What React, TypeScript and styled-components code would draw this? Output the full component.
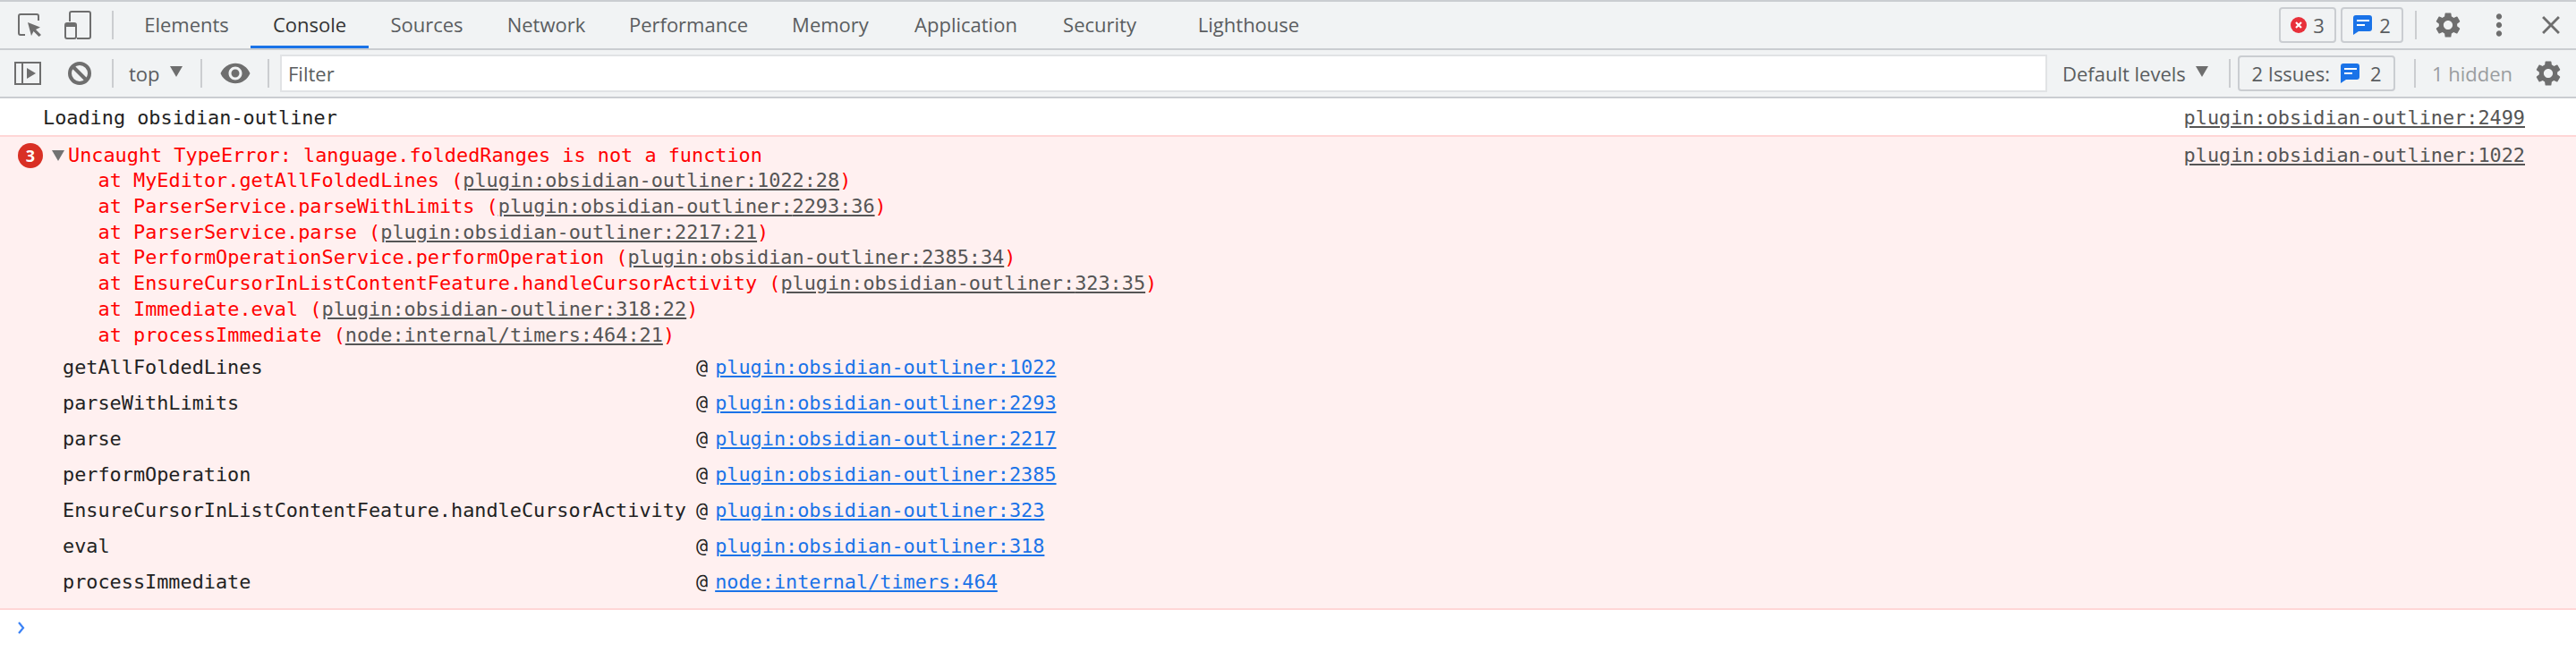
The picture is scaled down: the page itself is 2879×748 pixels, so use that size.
import React from 'react';
import styled, { createGlobalStyle } from 'styled-components';
import { MdClose, MdMoreVert, MdSettings, MdVisibility } from 'react-icons/md';

const GlobalStyle = createGlobalStyle`
  html, body {
    margin: 0;
    padding: 0;
    background: #fff;
  }
`;

const uiFont = `"Open Sans", "Noto Sans", sans-serif`;
const monoFont = `"DejaVu Sans Mono", "Liberation Mono", monospace`;

const Page = styled.div`
  width: 2879px;
  height: 748px;
  overflow: hidden;
  background: #fff;
  display: flex;
  flex-direction: column;
  border-top: 2px solid #cacdd1;
  box-sizing: border-box;
`;

const Bar = styled.div<{ $pr?: number }>`
  height: 54px;
  flex: none;
  box-sizing: border-box;
  display: flex;
  align-items: center;
  background: #f1f3f4;
  border-bottom: 2px solid #cacdd1;
  font-family: ${uiFont};
  font-size: 22px;
  color: #5a5d60;
  padding: 0 ${p => p.$pr ?? 0}px 0 7px;
`;

const IconSlot = styled.div<{ $w: number }>`
  width: ${p => p.$w}px;
  flex: none;
  display: flex;
  align-items: center;
  justify-content: center;
  color: #6e6e6e;
`;

const Divider = styled.div<{ $ml?: number; $mr?: number }>`
  width: 2px;
  height: 32px;
  flex: none;
  background: #cbcdd0;
  margin-left: ${p => p.$ml ?? 0}px;
  margin-right: ${p => p.$mr ?? 0}px;
`;

const Tab = styled.div<{ $w: number; $active?: boolean }>`
  width: ${p => p.$w}px;
  flex: none;
  height: 100%;
  box-sizing: border-box;
  display: flex;
  align-items: center;
  justify-content: center;
  color: ${p => (p.$active ? '#333' : '#5a5d60')};
  border-bottom: 3px solid ${p => (p.$active ? '#1a73e8' : 'transparent')};
`;

const Spacer = styled.div`
  flex: 1;
`;

const Counter = styled.div<{ $w: number; $gap: number }>`
  width: ${p => p.$w}px;
  height: 40px;
  flex: none;
  box-sizing: border-box;
  border: 2px solid #cacdd1;
  border-radius: 4px;
  display: flex;
  align-items: center;
  justify-content: center;
  gap: ${p => p.$gap}px;
  margin-right: 5px;
`;

const FilterBox = styled.div`
  flex: 1;
  height: 42px;
  box-sizing: border-box;
  background: #fff;
  border: 2px solid #e1e3e5;
  display: flex;
  align-items: center;
  padding-left: 7px;
  color: #5a5d60;
`;

const Caret = styled.span`
  width: 0;
  height: 0;
  border-left: 7.5px solid transparent;
  border-right: 7.5px solid transparent;
  border-top: 12px solid #6e6e6e;
  display: inline-block;
  margin-top: -4px;
`;

const Select = styled.div<{ $w: number }>`
  display: flex;
  align-items: center;
  gap: 11px;
  width: ${p => p.$w}px;
  padding-left: 17px;
  box-sizing: border-box;
  flex: none;
`;

const Hidden = styled.div`
  width: 126px;
  flex: none;
  box-sizing: border-box;
  padding-left: 18px;
  color: #9a9da0;
`;

const Log = styled.div`
  font-family: ${monoFont};
  font-size: 21.85px;
  color: #222;
`;

const InfoRow = styled.div`
  height: 41px;
  box-sizing: border-box;
  padding: 2px 57px 0 48px;
  display: flex;
  align-items: center;
  justify-content: space-between;
`;

const ErrorBlock = styled.div`
  height: 531px;
  box-sizing: border-box;
  background: #fff0f0;
  border-top: 2px solid #ffd6d6;
  border-bottom: 2px solid #ffd6d6;
  padding-top: 6px;
`;

const ErrorHead = styled.div`
  display: flex;
  align-items: center;
  height: 29px;
  padding-right: 57px;
  color: #f00;
`;

const ErrorCount = styled.div`
  width: 28px;
  height: 28px;
  margin-left: 20px;
  border-radius: 50%;
  background: #d93025;
  color: #fff;
  font-family: ${uiFont};
  font-weight: 700;
  font-size: 18px;
  display: flex;
  align-items: center;
  justify-content: center;
  flex: none;
`;

const Disclosure = styled.span`
  width: 0;
  height: 0;
  margin: 0 4px 0 10px;
  border-left: 7px solid transparent;
  border-right: 7px solid transparent;
  border-top: 12px solid #727272;
  flex: none;
`;

const Message = styled.div`
  flex: 1;
  white-space: pre;
`;

const Source = styled.span`
  color: #555;
  text-decoration: underline;
  white-space: pre;
`;

const StackList = styled.div`
  padding-left: 57px;
  color: #f00;
  white-space: pre;
  margin-bottom: 1px;
`;

const StackLine = styled.div`
  height: 28.8px;
  line-height: 28.8px;
`;

const Frames = styled.div`
  display: grid;
  grid-template-columns: 708px auto;
  grid-auto-rows: 40px;
  padding-left: 70px;
`;

const FrameName = styled.div`
  display: flex;
  align-items: center;
  white-space: pre;
`;

const FrameLink = styled.div`
  display: flex;
  align-items: center;
  white-space: pre;
`;

const At = styled.span`
  margin-right: 8px;
`;

const Link = styled.span`
  color: #1a73e8;
  text-decoration: underline;
`;

const Prompt = styled.div`
  height: 40px;
  padding-left: 19px;
  display: flex;
  align-items: center;
`;

const tabs = [
  { name: 'Elements', w: 143 },
  { name: 'Console', w: 132, active: true },
  { name: 'Sources', w: 130 },
  { name: 'Network', w: 137 },
  { name: 'Performance', w: 181 },
  { name: 'Memory', w: 136 },
  { name: 'Application', w: 167 },
  { name: 'Security', w: 132 },
  { name: 'Lighthouse', w: 201 },
];

const stack = [
  ['MyEditor.getAllFoldedLines', '1022:28'],
  ['ParserService.parseWithLimits', '2293:36'],
  ['ParserService.parse', '2217:21'],
  ['PerformOperationService.performOperation', '2385:34'],
  ['EnsureCursorInListContentFeature.handleCursorActivity', '323:35'],
  ['Immediate.eval', '318:22'],
];

const frames = [
  ['getAllFoldedLines', 'plugin:obsidian-outliner:1022'],
  ['parseWithLimits', 'plugin:obsidian-outliner:2293'],
  ['parse', 'plugin:obsidian-outliner:2217'],
  ['performOperation', 'plugin:obsidian-outliner:2385'],
  ['EnsureCursorInListContentFeature.handleCursorActivity', 'plugin:obsidian-outliner:323'],
  ['eval', 'plugin:obsidian-outliner:318'],
  ['processImmediate', 'node:internal/timers:464'],
];

const InspectIcon = () => (
  <svg width="26" height="26" viewBox="0 0 26 26" fill="none">
    <path d="M8 24H3a2 2 0 0 1-2-2V3a2 2 0 0 1 2-2h18a2 2 0 0 1 2 2v5" stroke="#6e6e6e" strokeWidth="2" />
    <path d="M11 10l14 5.500-5 2.500 6 6-2.500 2-6-6-2.500 5z" fill="#6e6e6e" />
  </svg>
);

const DeviceIcon = () => (
  <svg width="30" height="32" viewBox="0 0 30 32" fill="none">
    <path d="M6 12V3a2 2 0 0 1 2-2h19a2 2 0 0 1 2 2v26a2 2 0 0 1-2 2H14" stroke="#6e6e6e" strokeWidth="2" />
    <rect x="1" y="14" width="12" height="17" rx="2" stroke="#6e6e6e" strokeWidth="2" />
    <path d="M1 16a2 2 0 0 1 2-2h8a2 2 0 0 1 2 2v2H1z" fill="#6e6e6e" />
  </svg>
);

const SidebarIcon = () => (
  <svg width="30" height="26" viewBox="0 0 30 26" fill="none">
    <rect x="1" y="1" width="28" height="24" stroke="#6e6e6e" strokeWidth="2" />
    <path d="M9 1v24" stroke="#6e6e6e" strokeWidth="2" />
    <path d="M14 7l10 6-10 6z" fill="#6e6e6e" />
  </svg>
);

const ClearIcon = () => (
  <svg width="26" height="26" viewBox="0 0 26 26" fill="none">
    <circle cx="13" cy="13" r="11" stroke="#6e6e6e" strokeWidth="4" />
    <path d="M5.500 5.500l15 15" stroke="#6e6e6e" strokeWidth="4" />
  </svg>
);

const ErrorIcon = () => (
  <svg width="18" height="18" viewBox="0 0 18 18">
    <circle cx="9" cy="9" r="9" fill="#e8303a" />
    <path d="M6 6l6 6M12 6l-6 6" stroke="#fff" strokeWidth="2.200" />
  </svg>
);

const MessageIcon = () => (
  <svg width="21" height="22" viewBox="0 0 21 22">
    <path d="M3 0h15a3 3 0 0 1 3 3v12a3 3 0 0 1-3 3H6l-6 4V3a3 3 0 0 1 3-3z" fill="#1a73e8" />
    <path d="M4 6h14M4 11h9" stroke="#fff" strokeWidth="2" />
  </svg>
);

const PromptIcon = () => (
  <svg width="10" height="14" viewBox="0 0 10 14" fill="none">
    <path d="M2 1l5 6-5 6" stroke="#3b82f6" strokeWidth="2.200" />
  </svg>
);

export default function App() {
  return (
    <Page>
      <GlobalStyle />
      <Bar>
        <IconSlot $w={52}><InspectIcon /></IconSlot>
        <IconSlot $w={56}><DeviceIcon /></IconSlot>
        <Divider $ml={10} $mr={10} />
        {tabs.map(t => (
          <Tab key={t.name} $w={t.w} $active={t.active}>{t.name}</Tab>
        ))}
        <Spacer />
        <Counter $w={64} $gap={7}><ErrorIcon />3</Counter>
        <Counter $w={70} $gap={8}><MessageIcon />2</Counter>
        <Divider $ml={8} $mr={8} />
        <IconSlot $w={54}><MdSettings size={34} /></IconSlot>
        <IconSlot $w={60}><MdMoreVert size={38} /></IconSlot>
        <IconSlot $w={56}><MdClose size={34} /></IconSlot>
      </Bar>
      <Bar $pr={9}>
        <IconSlot $w={48}><SidebarIcon /></IconSlot>
        <IconSlot $w={68}><ClearIcon /></IconSlot>
        <Divider $ml={2} />
        <Select $w={97}>top<Caret /></Select>
        <Divider />
        <IconSlot $w={73}><MdVisibility size={36} /></IconSlot>
        <Divider $mr={12} />
        <FilterBox>Filter</FilterBox>
        <Select $w={203}>Default levels<Caret /></Select>
        <Divider $mr={8} />
        <Counter $w={176} $gap={12}>2 Issues:<MessageIcon />2</Counter>
        <Divider $ml={16} />
        <Hidden>1 hidden</Hidden>
        <IconSlot $w={44}><MdSettings size={34} /></IconSlot>
      </Bar>
      <Log>
        <InfoRow>
          <span>Loading obsidian-outliner</span>
          <Source>plugin:obsidian-outliner:2499</Source>
        </InfoRow>
        <ErrorBlock>
          <ErrorHead>
            <ErrorCount>3</ErrorCount>
            <Disclosure />
            <Message>Uncaught TypeError: language.foldedRanges is not a function</Message>
            <Source>plugin:obsidian-outliner:1022</Source>
          </ErrorHead>
          <StackList>
            {stack.map(([fn, loc]) => (
              <StackLine key={fn}>
                {'    at ' + fn + ' ('}<Source>plugin:obsidian-outliner:{loc}</Source>)
              </StackLine>
            ))}
            <StackLine>
              {'    at processImmediate ('}<Source>node:internal/timers:464:21</Source>)
            </StackLine>
          </StackList>
          <Frames>
            {frames.map(([fn, src]) => (
              <React.Fragment key={fn}>
                <FrameName>{fn}</FrameName>
                <FrameLink><At>@</At><Link>{src}</Link></FrameLink>
              </React.Fragment>
            ))}
          </Frames>
        </ErrorBlock>
        <Prompt><PromptIcon /></Prompt>
      </Log>
    </Page>
  );
}
